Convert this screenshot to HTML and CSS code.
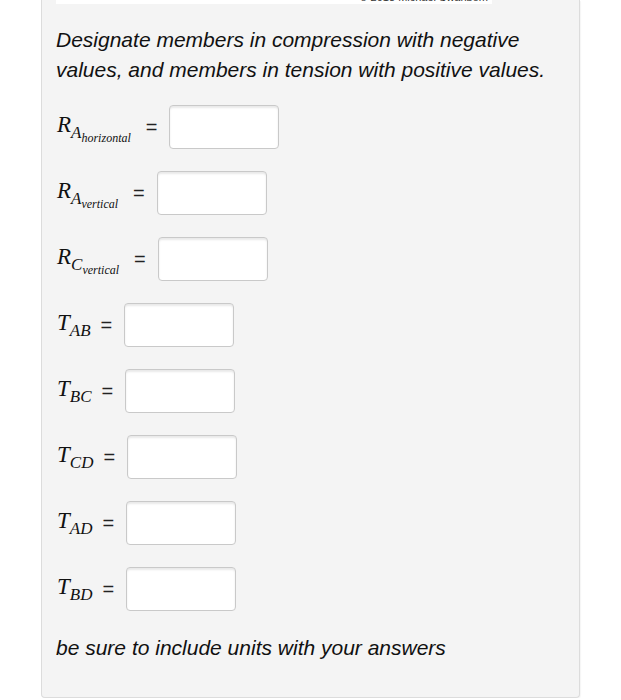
FILE: index.html
```html
<!DOCTYPE html>
<html>
<head>
<meta charset="utf-8">
<link rel="stylesheet" href="styles.css">
</head>
<body>
<div class="panel">
  <div class="strip"><span class="credit">© 2018 Michael Swanbom</span></div>
  <p class="prompt">Designate members in compression with negative values, and members in tension with positive values.</p>
  <div class="rows">
    <div class="row">
      <span class="label"><i>R</i><span class="sub"><i>A</i><span class="subsub"><i>horizontal</i></span></span></span>
      <span class="eq">=</span>
      <span class="box"></span>
    </div>
    <div class="row">
      <span class="label"><i>R</i><span class="sub"><i>A</i><span class="subsub"><i>vertical</i></span></span></span>
      <span class="eq">=</span>
      <span class="box"></span>
    </div>
    <div class="row">
      <span class="label"><i>R</i><span class="sub"><i>C</i><span class="subsub"><i>vertical</i></span></span></span>
      <span class="eq">=</span>
      <span class="box"></span>
    </div>
    <div class="row">
      <span class="label"><i>T</i><span class="sub"><i>AB</i></span></span>
      <span class="eq">=</span>
      <span class="box"></span>
    </div>
    <div class="row">
      <span class="label"><i>T</i><span class="sub"><i>BC</i></span></span>
      <span class="eq">=</span>
      <span class="box"></span>
    </div>
    <div class="row">
      <span class="label"><i>T</i><span class="sub"><i>CD</i></span></span>
      <span class="eq">=</span>
      <span class="box"></span>
    </div>
    <div class="row">
      <span class="label"><i>T</i><span class="sub"><i>AD</i></span></span>
      <span class="eq">=</span>
      <span class="box"></span>
    </div>
    <div class="row">
      <span class="label"><i>T</i><span class="sub"><i>BD</i></span></span>
      <span class="eq">=</span>
      <span class="box"></span>
    </div>
  </div>
  <p class="note">be sure to include units with your answers</p>
</div>
</body>
</html>
```
FILE: styles.css
```css
html, body {
  margin: 0;
  padding: 0;
  background: #ffffff;
}
body {
  font-family: "Liberation Sans", Arial, sans-serif;
  color: #111111;
}
.panel {
  box-sizing: border-box;
  margin-left: 41px;
  width: 539px;
  height: 698px;
  background: #f4f4f4;
  border: 1px solid #dcdcdc;
  border-top: none;
  border-radius: 0 0 4px 4px;
  box-shadow: 1px 1px 1px rgba(0, 0, 0, 0.04);
  padding: 0 14px;
}
.strip {
  width: 436px;
  height: 4px;
  background: #ffffff;
  overflow: hidden;
  text-align: right;
}
.credit {
  display: block;
  font-size: 11px;
  line-height: 11px;
  margin-top: -8px;
  padding-right: 4px;
  color: #333333;
}
.prompt {
  margin: 21px 0 0;
  font-size: 21px;
  line-height: 30px;
  font-style: italic;
  color: #111111;
}
.rows {
  display: flex;
  flex-direction: column;
  gap: 22px;
  margin-top: 20px;
}
.row {
  display: flex;
  align-items: center;
  height: 44px;
}
.label {
  font-family: "Liberation Serif", "Times New Roman", serif;
  font-size: 23px;
  line-height: 30px;
  margin-left: 1px;
  margin-bottom: 5px;
  white-space: nowrap;
}
.label i {
  font-style: italic;
}
.sub {
  font-size: 17px;
  line-height: 0;
  vertical-align: -6px;
}
.subsub {
  font-size: 12px;
  line-height: 0;
  vertical-align: -4px;
  padding-right: 5px;
}
.eq {
  font-family: "Liberation Sans", Arial, sans-serif;
  font-size: 20px;
  line-height: 20px;
  margin-left: 10px;
  color: #222222;
}
.box {
  box-sizing: border-box;
  width: 110px;
  height: 44px;
  margin-left: 12px;
  background: #ffffff;
  border: 1px solid #c9c9c9;
  border-radius: 4px;
  box-shadow: inset 0 2px 2px rgba(0, 0, 0, 0.09);
}
.note {
  margin: 22px 0 0;
  font-size: 21px;
  line-height: 30px;
  font-style: italic;
  color: #111111;
}
```
